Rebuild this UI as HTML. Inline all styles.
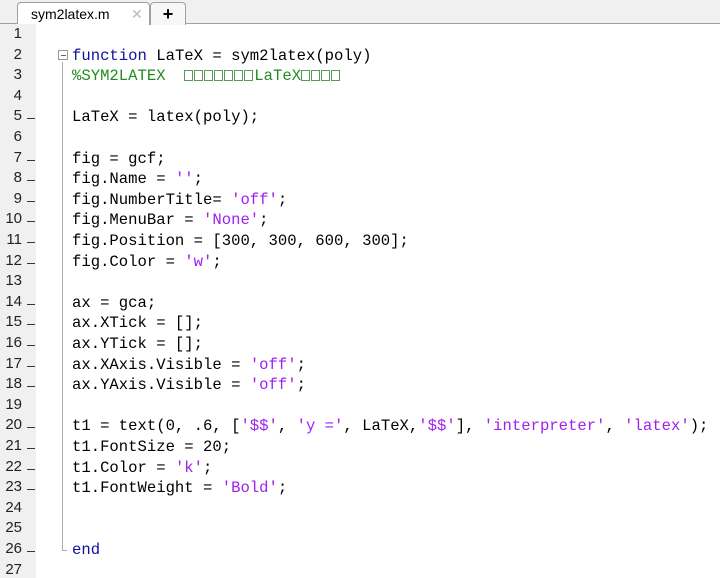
<!DOCTYPE html><html><head><style>
body{margin:0;width:720px;height:578px;background:#fff;overflow:hidden;position:relative;font-family:"Liberation Mono",monospace}
.bar{position:absolute;left:0;top:0;width:720px;height:23px;background:#f0f0f0;border-bottom:1px solid #a0a0a0}
.tab{position:absolute;top:2px;height:22px;background:#fff;border:1px solid #a0a0a0;border-bottom:none;border-radius:4px 4px 0 0;font-family:"Liberation Sans",sans-serif;font-size:14px;line-height:22px}
.gut{position:absolute;left:0;top:24px;width:36px;height:554px;background:#f0f0f0}
.ln{position:absolute;left:0;width:22px;text-align:right;font-family:"Liberation Sans",sans-serif;font-size:15px;color:#222}
.dash{position:absolute;left:27px;width:8px;height:1px;background:#333}
.c{position:absolute;left:72px;font-size:15.6px;white-space:pre;color:#000}
.k{color:#1010a0}.s{color:#a020f0}.cm{color:#228b22}
.b{display:inline-block;width:7px;height:9px;border:1px solid #5a9a5a;margin-right:1px;vertical-align:-1px}
</style></head><body>
<div class="bar"></div>
<div class="tab" style="left:17px;width:131px"><span style="margin-left:13px">sym2latex.m</span><span style="position:absolute;left:113px;color:#bbb">✕</span></div>
<div class="tab" style="left:150px;width:34px;background:#f7f7f7;text-align:center;font-weight:bold;font-size:18px">+</div>
<div class="gut"></div>
<div style="position:absolute;left:62px;top:62px;width:1px;height:488px;background:#aaa"></div>
<div style="position:absolute;left:62px;top:550px;width:5px;height:1px;background:#aaa"></div>
<div style="position:absolute;left:58px;top:50px;width:8px;height:8px;border:1px solid #999;background:#fff"><div style="position:absolute;left:2px;top:4px;width:5px;height:1px;background:#666"></div></div>
<div id="g"></div>
<script>
function bx(n){var s='';for(var i=0;i<n;i++)s+='<span class="b"></span>';return s;}
var lines=[
'',
'<span class="k">function</span> LaTeX = sym2latex(poly)',
'<span class="cm">%SYM2LATEX  '+bx(7)+'LaTeX'+bx(4)+'</span>',
'',
'LaTeX = latex(poly);',
'',
'fig = gcf;',
"fig.Name = <span class=\"s\">''</span>;",
"fig.NumberTitle= <span class=\"s\">'off'</span>;",
"fig.MenuBar = <span class=\"s\">'None'</span>;",
'fig.Position = [300, 300, 600, 300];',
"fig.Color = <span class=\"s\">'w'</span>;",
'',
'ax = gca;',
'ax.XTick = [];',
'ax.YTick = [];',
"ax.XAxis.Visible = <span class=\"s\">'off'</span>;",
"ax.YAxis.Visible = <span class=\"s\">'off'</span>;",
'',
"t1 = text(0, .6, [<span class=\"s\">'$$'</span>, <span class=\"s\">'y ='</span>, LaTeX,<span class=\"s\">'$$'</span>], <span class=\"s\">'interpreter'</span>, <span class=\"s\">'latex'</span>);",
't1.FontSize = 20;',
"t1.Color = <span class=\"s\">'k'</span>;",
"t1.FontWeight = <span class=\"s\">'Bold'</span>;",
'','',
'<span class="k">end</span>',''];
var dashes=[5,7,8,9,10,11,12,14,15,16,17,18,20,21,22,23,26];
var h='';
for(var i=0;i<27;i++){var y=25+i*20.6;
h+='<div class="ln" style="top:'+y+'px">'+(i+1)+'</div>';
if(dashes.indexOf(i+1)>=0)h+='<div class="dash" style="top:'+(y+11)+'px"></div>';
h+='<div class="c" style="top:'+(y+1)+'px">'+lines[i]+'</div>';}
document.getElementById('g').innerHTML=h;
</script>
</body></html>
